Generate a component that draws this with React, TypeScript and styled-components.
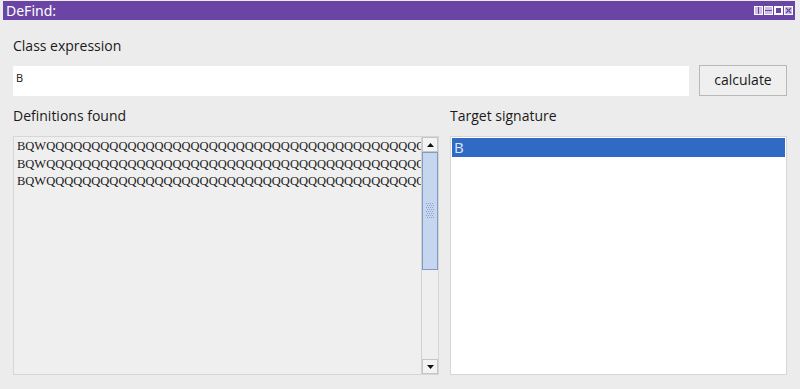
import styled, { createGlobalStyle } from 'styled-components';

const GlobalStyle = createGlobalStyle`
  html, body {
    margin: 0;
    padding: 0;
    background: #ececec;
  }
  body {
    font-family: "Open Sans", "Noto Sans", "DejaVu Sans", sans-serif;
  }
`;

const S_Window = styled.div`
  width: 800px;
  height: 389px;
  box-sizing: border-box;
  padding: 1px 5px 0 3px;
  background: #ececec;
  display: flex;
  flex-direction: column;
`;

const S_TitleBar = styled.div`
  height: 19px;
  background: #6a45a5;
  display: flex;
  align-items: center;
  justify-content: space-between;
  padding: 0 2px 0 3px;
  color: #ffffff;
  font-size: 14px;
  font-family: "Noto Sans", "DejaVu Sans", sans-serif;
`;

const S_TitleIcons = styled.div`
  display: flex;
  gap: 1px;
`;

const S_Body = styled.div`
  flex: 1;
  padding: 16px 8px 14px 10px;
  display: flex;
  flex-direction: column;
`;

const S_Label = styled.div`
  font-size: 14px;
  color: #1a1a1a;
  height: 20px;
  line-height: 20px;
`;

const S_InputRow = styled.div`
  display: flex;
  align-items: center;
  gap: 10px;
  margin-top: 9px;
`;

const S_Input = styled.div`
  flex: 1;
  height: 30px;
  background: #ffffff;
  font-size: 11px;
  padding: 4px 3px;
  box-sizing: border-box;
  color: #111;
`;

const S_Button = styled.button`
  width: 88px;
  height: 31px;
  background: #efefef;
  border: 1px solid #b8b8b8;
  font-family: "Open Sans", "Noto Sans", sans-serif;
  font-size: 14px;
  color: #1a1a1a;
  padding: 0 0 2px 0;
`;

const S_Columns = styled.div`
  flex: 1;
  display: grid;
  grid-template-columns: 426px 337px;
  column-gap: 11px;
  margin-top: 10px;
`;

const S_Column = styled.div`
  display: flex;
  flex-direction: column;
`;

const S_ListBox = styled.div<{ $white?: boolean }>`
  flex: 1;
  margin-top: 10px;
  border: 1px solid #d6d6d6;
  background: ${(p) => (p.$white ? '#ffffff' : '#efefef')};
  display: flex;
  overflow: hidden;
`;

const S_TextArea = styled.div`
  flex: 1;
  overflow: hidden;
  padding: 1px 0 0 3px;
  font-family: "Liberation Serif", "Times New Roman", serif;
  font-size: 12.5px;
  line-height: 17.5px;
  color: #1a1a1a;
  white-space: nowrap;
`;

const S_Scrollbar = styled.div`
  width: 16px;
  display: flex;
  flex-direction: column;
  background: #ededed;
  border-left: 1px solid #d2d2d2;
`;

const S_ScrollButton = styled.div`
  height: 15px;
  display: flex;
  align-items: center;
  justify-content: center;
  background: #f3f3f3;
  border: 1px solid #c6c6c6;
  box-sizing: border-box;
`;

const S_Track = styled.div`
  flex: 1;
  display: flex;
  flex-direction: column;
  background: #efefef;
`;

const S_Thumb = styled.div`
  height: 118px;
  background: #c6d6ee;
  border: 1px solid #7f9bc6;
  box-sizing: border-box;
  display: flex;
  align-items: center;
  justify-content: center;
`;

const S_List = styled.div`
  flex: 1;
  padding: 1px;
`;

const S_ListItem = styled.div<{ $selected?: boolean }>`
  height: 19px;
  line-height: 19px;
  padding-left: 2px;
  font-size: 15px;
  background: ${(p) => (p.$selected ? '#316ac5' : 'transparent')};
  color: ${(p) => (p.$selected ? '#dbe6f7' : '#1a1a1a')};
`;

function TitleIcon({ kind }: { kind: 'cols' | 'rows' | 'max' | 'close' }) {
  return (
    <svg width="9" height="9" viewBox="0 0 9 9">
      <rect x="0" y="0" width="9" height="9" fill="#ffffff" />
      {kind === 'cols' && <rect x="1" y="1" width="3" height="7" fill="#6a45a5" opacity="0.35" />}
      {kind === 'cols' && <rect x="4" y="1" width="1" height="7" fill="#6a45a5" />}
      {kind === 'cols' && <rect x="5" y="1" width="3" height="7" fill="#6a45a5" opacity="0.35" />}
      {kind === 'rows' && <rect x="1" y="1" width="7" height="3" fill="#6a45a5" opacity="0.35" />}
      {kind === 'rows' && <rect x="1" y="4" width="7" height="1" fill="#6a45a5" />}
      {kind === 'rows' && <rect x="1" y="5" width="7" height="3" fill="#6a45a5" opacity="0.35" />}
      {kind === 'max' && <rect x="2" y="2" width="5" height="5" fill="#6a45a5" />}
      {kind === 'close' && <rect x="1" y="1" width="7" height="7" fill="#6a45a5" opacity="0.35" />}
      {kind === 'close' && (
        <path d="M2 2 L7 7 M7 2 L2 7" stroke="#6a45a5" strokeWidth="1.2" />
      )}
    </svg>
  );
}

function Grip() {
  const dots = [];
  for (let r = 0; r < 8; r++) {
    for (let c = 0; c < 4; c++) {
      dots.push(<rect key={`${r}-${c}`} x={c * 2 + (r % 2)} y={r * 2} width="1" height="1" fill="#8aa4cf" />);
    }
  }
  return (
    <svg width="9" height="16" viewBox="0 0 9 16">
      {dots}
    </svg>
  );
}

const line = 'BQW' + 'Q'.repeat(60);

function App() {
  return (
    <>
      <GlobalStyle />
      <S_Window>
        <S_TitleBar>
          <span>DeFind:</span>
          <S_TitleIcons>
            <TitleIcon kind="cols" />
            <TitleIcon kind="rows" />
            <TitleIcon kind="max" />
            <TitleIcon kind="close" />
          </S_TitleIcons>
        </S_TitleBar>
        <S_Body>
          <S_Label>Class expression</S_Label>
          <S_InputRow>
            <S_Input>B</S_Input>
            <S_Button>calculate</S_Button>
          </S_InputRow>
          <S_Columns>
            <S_Column>
              <S_Label>Definitions found</S_Label>
              <S_ListBox>
                <S_TextArea>
                  <div>{line}</div>
                  <div>{line}</div>
                  <div>{line}</div>
                </S_TextArea>
                <S_Scrollbar>
                  <S_ScrollButton>
                    <svg width="7" height="4" viewBox="0 0 7 4">
                      <path d="M0 4 L3.5 0 L7 4 Z" fill="#111" />
                    </svg>
                  </S_ScrollButton>
                  <S_Track>
                    <S_Thumb>
                      <Grip />
                    </S_Thumb>
                  </S_Track>
                  <S_ScrollButton>
                    <svg width="7" height="4" viewBox="0 0 7 4">
                      <path d="M0 0 L7 0 L3.5 4 Z" fill="#111" />
                    </svg>
                  </S_ScrollButton>
                </S_Scrollbar>
              </S_ListBox>
            </S_Column>
            <S_Column>
              <S_Label>Target signature</S_Label>
              <S_ListBox $white>
                <S_List>
                  <S_ListItem $selected>B</S_ListItem>
                </S_List>
              </S_ListBox>
            </S_Column>
          </S_Columns>
        </S_Body>
      </S_Window>
    </>
  );
}

export default App;
